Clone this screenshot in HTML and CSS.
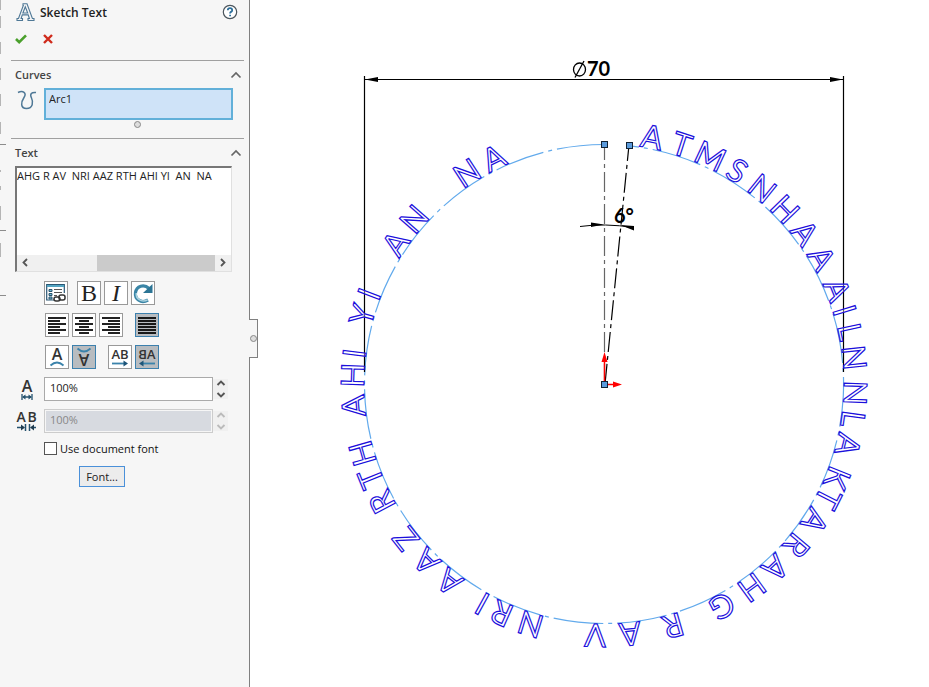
FILE: index.html
```html
<!DOCTYPE html>
<html lang="en">
  <head>
    <meta charset="utf-8">
    <title>Sketch Text</title>
    <link rel="stylesheet" href="styles.css">
  </head>
  <body>
    <div class="app">
      <aside class="panel">
        <svg class="ruler" width="6" height="300" viewBox="0 0 6 300" aria-hidden="true">
          <path d="M0.5 0v10M0.5 16v12M0.5 42v12M0.5 68v12M0.5 94v12M0.5 122v12M0.5 170v2M0.5 186v4M0.5 206v14M0.5 243v14" stroke="#b5b5b5"/>
          <path d="M0 144.5h6M0 230.5h6M0 295.5h6" stroke="#8c8c8c"/>
        </svg>

        <header class="title">
          <svg class="logo" width="19" height="18" viewBox="0 0 19 18" fill="none" stroke="#4f7896" stroke-width="1.1" aria-hidden="true">
            <path d="M7 .7h4L16.400 15.500h1.600v2h-6v-2h1.400l-1.200-3.600H6.300l-1.200 3.600h1.400v2H1v-2h1.500L7.300 2.500H7z"/>
            <path d="M9.300 3.800L6.900 10h4.800z"/>
          </svg>
          <h1>Sketch Text</h1>
          <button class="plain" aria-label="Help">
            <svg width="16" height="16" viewBox="0 0 16 16" fill="none">
              <circle cx="8" cy="8" r="6.700" stroke="#4b555c" stroke-width="1.200" fill="#fff"/>
              <path d="M5.800 6.300Q5.800 4.200 8 4.200T10.200 6.200Q10.200 7.200 9 7.900Q8.100 8.400 8.100 9.600" stroke="#2d6f9b" stroke-width="1.800"/>
              <path d="M7.200 10.700h1.800v1.600H7.200z" fill="#2d6f9b"/>
            </svg>
          </button>
        </header>

        <div class="actions">
          <button class="plain" aria-label="OK">
            <svg width="12" height="12" viewBox="0 0 12 12"><path d="M1 6l3.200 3.200L11 2.400" fill="none" stroke="#4aa02c" stroke-width="2.600"/></svg>
          </button>
          <button class="plain" aria-label="Cancel">
            <svg width="10" height="10" viewBox="0 0 10 10"><path d="M1 1l8 8M9 1L1 9" stroke="#cf2a1b" stroke-width="2.400"/></svg>
          </button>
        </div>

        <section class="section">
          <div class="heading">
            <h2><label for="curves">Curves</label></h2>
            <button class="plain" aria-label="Collapse Curves">
              <svg width="12" height="8" viewBox="0 0 12 8"><path d="M1.500 6.500L6 2l4.500 4.500" fill="none" stroke="#666" stroke-width="1.700"/></svg>
            </button>
          </div>
          <div class="curves">
            <svg width="20" height="24" viewBox="0 0 20 24" fill="none" stroke="#4f7896" stroke-width="1.500" aria-hidden="true">
              <path d="M1 4.500C6 2 10 5 7 9.500S3 20.500 9.500 20.500S16.500 14 14.500 10S14.500 4 19 4.500"/>
            </svg>
            <input id="curves" class="curves-box" type="text" value="Arc1" readonly>
          </div>
          <div class="grip"><span class="dot"></span></div>
        </section>

        <section class="section">
          <div class="heading">
            <h2><label for="text">Text</label></h2>
            <button class="plain" aria-label="Collapse Text">
              <svg width="12" height="8" viewBox="0 0 12 8"><path d="M1.500 6.500L6 2l4.500 4.500" fill="none" stroke="#666" stroke-width="1.700"/></svg>
            </button>
          </div>

          <div class="text-box">
            <textarea id="text" wrap="off" spellcheck="false">AHG R AV  NRI AAZ RTH AHI YI  AN  NA</textarea>
            <div class="scrollbar">
              <button class="plain" aria-label="Scroll left">
                <svg width="16" height="15" viewBox="0 0 16 15"><path d="M10 4L6.500 7.500 10 11" fill="none" stroke="#555" stroke-width="1.800"/></svg>
              </button>
              <div class="track"><div class="thumb"></div></div>
              <button class="plain" aria-label="Scroll right">
                <svg width="16" height="15" viewBox="0 0 16 15"><path d="M6 4l3.500 3.500L6 11" fill="none" stroke="#555" stroke-width="1.800"/></svg>
              </button>
            </div>
          </div>

          <div class="tools">
            <div class="tool-row">
              <button class="tool" aria-label="Link to property">
                <svg width="20" height="20" viewBox="0 0 20 20" fill="none">
                  <path d="M.7 1.700h17.600V10M.7 1v16H8" stroke="#2a5673" stroke-width="1.200"/>
                  <path d="M1 2h17v2H1z" fill="#53a5c2"/>
                  <path d="M3 6.500h3v2H3zM3 10.500h3v2H3zM3 14h3v2H3z" fill="#75bdd5" stroke="#28536d"/>
                  <path d="M8 6.500h8M8 9.500h8M8 12.500h3" stroke="#555"/>
                  <rect x="8" y="14" width="6" height="4" rx="2" stroke="#333" stroke-width="1.500"/>
                  <rect x="13" y="12" width="6" height="5" rx="2" stroke="#333" stroke-width="1.500"/>
                </svg>
              </button>
              <button class="tool apart-small letter">B</button>
              <button class="tool letter italic">I</button>
              <button class="tool" aria-label="Rotate">
                <svg width="22" height="22" viewBox="0 0 22 22">
                  <path d="M16 18C9 22 2.500 17 3.500 10.500S12 1.500 17 6.500" fill="none" stroke="#3a85a6" stroke-width="3.200"/>
                  <path d="M15.500 18C9 21 3.500 16.500 4.300 11" fill="none" stroke="#a9d2df" stroke-width="1.600"/>
                  <path d="M20.500 2v9H11z" fill="#2c7595"/>
                </svg>
              </button>
            </div>
            <div class="tool-row shifted">
              <button class="tool" aria-label="Align left">
                <svg width="20" height="20" viewBox="0 0 20 20" stroke="#222" stroke-width="1.800"><path d="M1 3h18M1 6h12M1 9h18M1 12h12M1 15h18M1 18h12"/></svg>
              </button>
              <button class="tool" aria-label="Center align">
                <svg width="20" height="20" viewBox="0 0 20 20" stroke="#222" stroke-width="1.800"><path d="M1 3h18M5 6h10M1 9h18M5 12h10M1 15h18M5 18h10"/></svg>
              </button>
              <button class="tool" aria-label="Align right">
                <svg width="20" height="20" viewBox="0 0 20 20" stroke="#222" stroke-width="1.800"><path d="M1 3h18M7 6h12M1 9h18M7 12h12M1 15h18M7 18h12"/></svg>
              </button>
              <button class="tool apart active" aria-label="Full justify">
                <svg width="20" height="20" viewBox="0 0 20 20" stroke="#181818" stroke-width="1.800"><path d="M1 3h18M1 6h18M1 9h18M1 12h18M1 15h18M1 18h18"/></svg>
              </button>
            </div>
            <div class="tool-row shifted">
              <button class="tool" aria-label="Flip vertical">
                <svg width="22" height="22" viewBox="0 0 22 22">
                  <text class="glyph" x="11" y="14" font-size="16">A</text>
                  <path d="M4.500 19.500Q11 13.500 17.500 19.500" fill="none" stroke="#3b83ab" stroke-width="1.800"/>
                </svg>
              </button>
              <button class="tool active" aria-label="Flip vertical, reversed">
                <svg width="22" height="22" viewBox="0 0 22 22">
                  <g transform="rotate(180 11 11)"><text class="glyph" x="11" y="14" font-size="16">A</text></g>
                  <path d="M4.500 2.500Q11 8.500 17.500 2.500" fill="none" stroke="#3b83ab" stroke-width="1.800"/>
                </svg>
              </button>
              <button class="tool apart" aria-label="Flip horizontal">
                <svg width="22" height="22" viewBox="0 0 22 22">
                  <text class="glyph" x="11" y="13" font-size="13">AB</text>
                  <path d="M3 17.500h12" stroke="#3b83ab" stroke-width="1.800"/>
                  <path d="M14.500 14.500l4.500 3-4.500 3z" fill="#1d5579"/>
                </svg>
              </button>
              <button class="tool active" aria-label="Flip horizontal, reversed">
                <svg width="22" height="22" viewBox="0 0 22 22">
                  <g transform="matrix(-1 0 0 1 22 0)">
                    <text class="glyph" x="11" y="13" font-size="13">AB</text>
                    <path d="M3 17.500h12" stroke="#3b83ab" stroke-width="1.800"/>
                    <path d="M14.500 14.500l4.500 3-4.500 3z" fill="#1d5579"/>
                  </g>
                </svg>
              </button>
            </div>
          </div>

          <div class="field">
            <svg width="20" height="22" viewBox="0 0 20 22" aria-hidden="true">
              <text class="glyph" x="10" y="14" font-size="16">A</text>
              <path d="M5 16v6M15 16v6M6 19h8" stroke="#24516d" stroke-width="1.300"/>
              <path d="M5 19l3.500-2.500v5zM15 19l-3.500-2.500v5z" fill="#24516d"/>
            </svg>
            <input class="number" type="text" value="100%" aria-label="Width factor">
            <div class="spin">
              <button class="plain" aria-label="Increase width"><svg width="10" height="8" viewBox="0 0 10 8"><path d="M1.500 6L5 2.500 8.500 6" fill="none" stroke="#555" stroke-width="1.900"/></svg></button>
              <button class="plain" aria-label="Decrease width"><svg width="10" height="8" viewBox="0 0 10 8"><path d="M1.500 2L5 5.500 8.500 2" fill="none" stroke="#555" stroke-width="1.900"/></svg></button>
            </div>
          </div>

          <div class="field">
            <svg width="20" height="22" viewBox="0 0 20 22" aria-hidden="true">
              <text class="glyph" x="4" y="12" font-size="14">A</text>
              <text class="glyph" x="15" y="12" font-size="14">B</text>
              <path d="M8.500 14v7M12.500 14v7M0 17.500h4M15 17.500h4" stroke="#24516d" stroke-width="1.500"/>
              <path d="M8 17.500L4 14.500v6zM13 17.500l4-3v6z" fill="#1e3c50"/>
            </svg>
            <input class="number" type="text" value="100%" aria-label="Spacing" disabled>
            <div class="spin">
              <button class="plain" aria-label="Increase spacing" disabled><svg width="10" height="8" viewBox="0 0 10 8"><path d="M1.500 6L5 2.500 8.500 6" fill="none" stroke="#bbb" stroke-width="1.900"/></svg></button>
              <button class="plain" aria-label="Decrease spacing" disabled><svg width="10" height="8" viewBox="0 0 10 8"><path d="M1.500 2L5 5.500 8.500 2" fill="none" stroke="#bbb" stroke-width="1.900"/></svg></button>
            </div>
          </div>

          <label class="check"><input type="checkbox"> Use document font</label>
          <button class="font-btn">Font...</button>
        </section>

        <div class="handle"><span class="dot"></span></div>
      </aside>

      <main class="canvas">
        <svg class="drawing" viewBox="250 0 679 687">
          <!-- construction arc, 6deg to 360deg -->
          <path class="arc" d="M629 145.800A239.500 239.500 0 0 1 604 623.500A239.500 239.500 0 0 1 604 144.500"/>

          <!-- diameter dimension -->
          <path class="dim" d="M364.500 76V372M843.500 76V372M365 79.500H843"/>
          <path d="M365 79.500l13-2.500v5zM843 79.500l-13-2.500v5z"/>
          <ellipse cx="579.500" cy="69.500" rx="6" ry="6.500" fill="none" stroke="#000" stroke-width="1.300"/>
          <path d="M575 77.500L584 61" stroke="#000" stroke-width="1.300"/>
          <text class="dim-text" x="587" y="76">70</text>

          <!-- angle dimension -->
          <path class="center" d="M604.500 144V384"/>
          <path class="center dark" d="M629 145L605 384"/>
          <path d="M580 226.500Q604 223 634 227.500" fill="none" stroke="#000"/>
          <path d="M604 224.500l-13-2v4.500zM620 225l14 1v4.500z"/>
          <text class="dim-text" x="614" y="223">6°</text>

          <g class="letters" transform="translate(604 384)">
            <text y="-240" transform="rotate(11)">A</text>
            <text y="-240" transform="rotate(18)">T</text>
            <text y="-240" transform="rotate(25)">M</text>
            <text y="-240" transform="rotate(32)">S</text>
            <text y="-240" transform="rotate(39)">N</text>
            <text y="-240" transform="rotate(46)">H</text>
            <text y="-240" transform="rotate(53)">A</text>
            <text y="-240" transform="rotate(60)">A</text>
            <text y="-240" transform="rotate(68)">A</text>
            <text y="-240" transform="rotate(73)">I</text>
            <text y="-240" transform="rotate(78)">L</text>
            <text y="-240" transform="rotate(84)">N</text>
            <text y="-240" transform="rotate(92)">N</text>
            <text y="-240" transform="rotate(98)">L</text>
            <text y="-240" transform="rotate(104)">A</text>
            <text y="-240" transform="rotate(112)">K</text>
            <text y="-240" transform="rotate(117)">T</text>
            <text y="-240" transform="rotate(123)">A</text>
            <text y="-240" transform="rotate(130)">R</text>
            <text y="-240" transform="rotate(137)">A</text>
            <text y="-240" transform="rotate(144)">H</text>
            <text y="-240" transform="rotate(152)">G</text>
            <text y="-240" transform="rotate(164)">R</text>
            <text y="-240" transform="rotate(174)">A</text>
            <text y="-240" transform="rotate(182)">V</text>
            <text y="-240" transform="rotate(197)">N</text>
            <text y="-240" transform="rotate(204)">R</text>
            <text y="-240" transform="rotate(209)">I</text>
            <text y="-240" transform="rotate(218)">A</text>
            <text y="-240" transform="rotate(225)">A</text>
            <text y="-240" transform="rotate(232)">Z</text>
            <text y="-240" transform="rotate(242)">R</text>
            <text y="-240" transform="rotate(248)">T</text>
            <text y="-240" transform="rotate(254)">H</text>
            <text y="-240" transform="rotate(265)">A</text>
            <text y="-240" transform="rotate(272)">H</text>
            <text y="-240" transform="rotate(277)">I</text>
            <text y="-240" transform="rotate(286)">Y</text>
            <text y="-240" transform="rotate(291)">I</text>
            <text y="-240" transform="rotate(304)">A</text>
            <text y="-240" transform="rotate(311)">N</text>
            <text y="-240" transform="rotate(327)">N</text>
            <text y="-240" transform="rotate(334)">A</text>
          </g>

          <!-- origin -->
          <path d="M604.500 384V362M605 384.500H613" stroke="#f00" stroke-width="1.500"/>
          <path d="M604.500 352l3 10h-6zM622 384.500l-9-3v6z" fill="#f00"/>
          <g class="points">
            <rect x="601.500" y="141.500" width="6" height="6"/>
            <rect x="626.500" y="142.500" width="6" height="6"/>
            <rect x="601.500" y="381.500" width="6" height="6"/>
          </g>
        </svg>
      </main>
    </div>
  </body>
</html>
```
FILE: styles.css
```css
* {
	box-sizing: border-box;
}
body {
	margin: 0;
	font-family: "Open Sans", "Noto Sans", sans-serif;
	font-size: 11px;
	color: #222;
	background-color: #fff;
}
h1, h2 {
	margin: 0;
	font-weight: 600;
}
h1 {
	flex: 1;
	font-size: 12px;
}
h2 {
	font-size: 11px;
	color: #444;
}
button, input, textarea {
	font: inherit;
	color: inherit;
	margin: 0;
	border-radius: 0;
}
svg {
	display: block;
	flex: none;
	overflow: visible;
}

.app {
	display: flex;
	min-height: 100vh;
}
.panel {
	position: relative;
	flex: 0 0 250px;
	padding: 0 5px 0 11px;
	background-color: #f6f6f6;
	border-right: 1px solid #808080;
}
.canvas {
	flex: 1;
	min-width: 0;
}
.ruler {
	position: absolute;
	left: 0;
	top: 0;
}
.plain {
	display: flex;
	padding: 0;
	border: 0;
	background: none;
}

.title {
	display: flex;
	align-items: center;
	gap: 5px;
	height: 24px;
	padding: 0 6px 0 5px;
}
.actions {
	display: flex;
	align-items: center;
	gap: 16px;
	height: 36px;
	padding: 0 4px 6px;
}
.section {
	border-top: 1px solid #a0a0a0;
}
.heading {
	display: flex;
	align-items: center;
	justify-content: space-between;
	height: 27px;
	padding: 0 2px 0 4px;
}
.curves {
	display: flex;
	gap: 7px;
	padding: 0 11px 0 6px;
}
.curves-box {
	flex: 1;
	min-width: 0;
	height: 32px;
	padding: 0 3px 12px;
	border: 2px solid #62b0d9;
	background-color: #cfe3f8;
}
.grip {
	display: flex;
	justify-content: center;
	height: 18px;
	padding: 1px 0 0 20px;
}
.dot {
	width: 7px;
	height: 7px;
	border: 1px solid #888;
	border-radius: 50%;
	background-color: #ddd;
}

.text-box {
	margin: 0 12px 0 4px;
	border: 1px solid #e0e0e0;
	border-top: 2px solid #777;
	border-left: 2px solid #777;
	background-color: #fff;
}
.text-box textarea {
	display: block;
	width: 100%;
	height: 87px;
	padding: 0;
	border: 0;
	resize: none;
	overflow: hidden;
	line-height: 16px;
}
.scrollbar {
	display: flex;
	height: 16px;
	background-color: #f0f0f0;
}
.track {
	flex: 1;
	display: flex;
	justify-content: flex-end;
}
.thumb {
	width: 65%;
	background-color: #cbcbcb;
}

.tools {
	display: flex;
	flex-direction: column;
	gap: 8px;
	padding: 9px 0 8px 33px;
}
.tool-row {
	display: flex;
	gap: 3px;
}
.shifted {
	padding-left: 1px;
}
.tool {
	display: flex;
	align-items: center;
	justify-content: center;
	width: 24px;
	height: 24px;
	padding: 0;
	border: 1px solid #999;
	background-color: #fff;
}
.tool.active {
	border-color: #3c80ad;
	background-color: #b8bcc0;
}
.apart {
	margin-left: 9px;
}
.apart-small {
	margin-left: 6px;
}
.letter {
	font-family: "Liberation Serif", serif;
	font-size: 24px;
	line-height: 22px;
}
.italic {
	font-style: italic;
}
.glyph {
	font-family: "Open Sans", sans-serif;
	font-weight: 600;
	fill: #333;
	text-anchor: middle;
}

.field {
	display: flex;
	align-items: center;
	height: 24px;
	margin-bottom: 8px;
	padding: 0 16px 0 6px;
}
.number {
	flex: 1;
	min-width: 0;
	height: 24px;
	margin-left: 7px;
	padding: 0 5px 4px;
	border: 1px solid #aaa;
	background-color: #fff;
}
.number:disabled {
	color: #888;
	background-color: #d7dae0;
	border-color: #ccc;
	box-shadow: inset 0 0 0 1px #f6f6f6;
}
.spin {
	display: flex;
	flex-direction: column;
	align-items: center;
	gap: 4px;
	width: 15px;
	background-color: #f0f0f0;
}
.check {
	display: flex;
	align-items: center;
	gap: 3px;
	height: 15px;
	margin-left: 33px;
	color: #111;
}
.check input {
	appearance: none;
	width: 13px;
	height: 13px;
	border: 1px solid #555;
	background-color: #fff;
}
.font-btn {
	width: 46px;
	height: 21px;
	margin: 10px 0 0 68px;
	padding: 0;
	border: 1px solid #4a90d9;
	background-color: #ececec;
}
.handle {
	position: absolute;
	right: -9px;
	top: 319px;
	display: flex;
	align-items: center;
	justify-content: center;
	width: 9px;
	height: 39px;
	border: 1px solid #808080;
	border-left: 0;
	background-color: #f6f6f6;
}
.handle .dot {
	flex: none;
}

.drawing {
	width: 100%;
	height: auto;
}
.arc {
	fill: none;
	stroke: #62aaec;
	stroke-width: 1.2;
	stroke-dasharray: 50 5 4 5;
	stroke-dashoffset: 40;
}
.dim {
	fill: none;
	stroke: #000;
	stroke-width: 1.2;
}
.dim-text {
	font-family: Lato, sans-serif;
	font-size: 20px;
	font-weight: bold;
}
.center {
	fill: none;
	stroke: #666;
	stroke-width: 1.2;
	stroke-dasharray: 20 4 4 4;
	stroke-dashoffset: 4;
}
.dark {
	stroke: #000;
}
.letters {
	font-family: Lato, sans-serif;
	font-size: 32px;
	text-anchor: middle;
	fill: #fff;
	fill-opacity: 0.4;
	stroke: #1c10dc;
	stroke-width: 1.2;
}
.points {
	fill: #5b9bdc;
	stroke: #123;
}
```
